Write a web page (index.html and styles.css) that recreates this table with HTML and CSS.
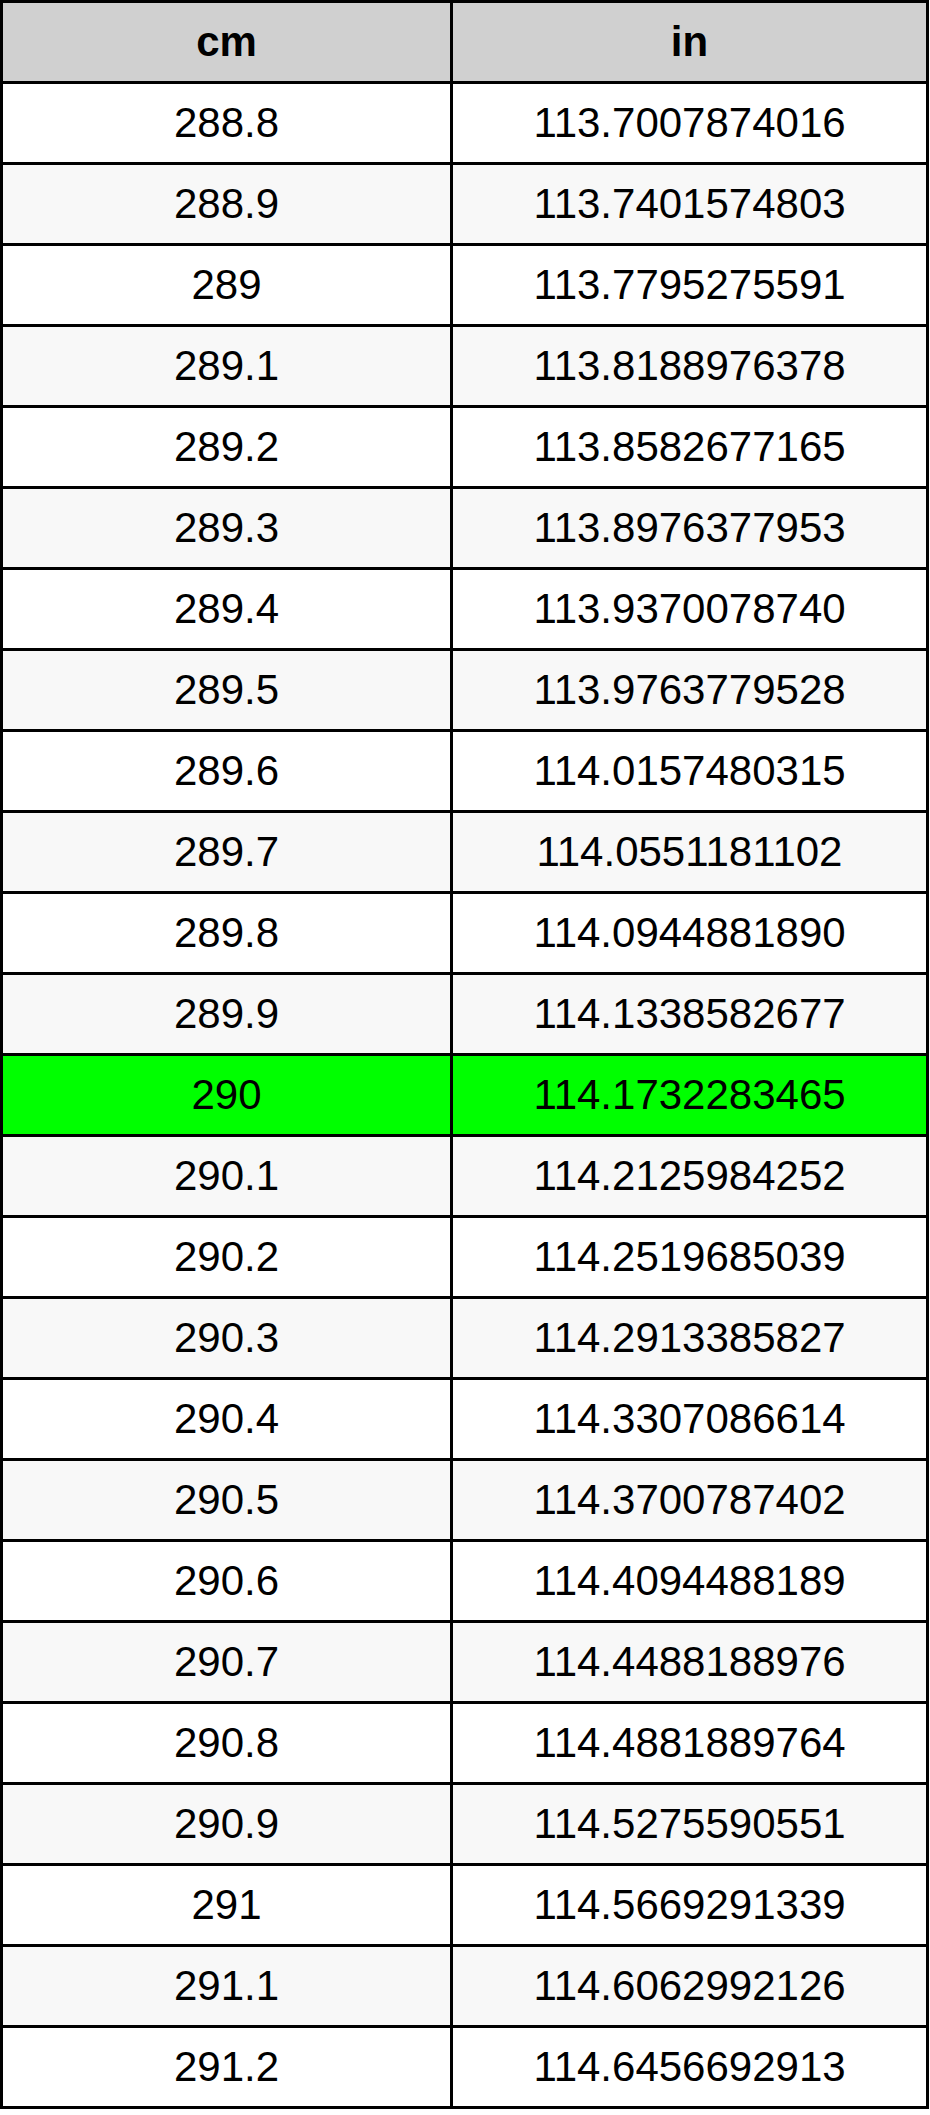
FILE: index.html
```html
<!DOCTYPE html>
<html>
<head>
<meta charset="utf-8">
<title>cm to in</title>
<link rel="stylesheet" href="styles.css">
</head>
<body>
<table class="conv">
<colgroup><col class="c1"><col class="c2"></colgroup>
<thead>
<tr><th>cm</th><th>in</th></tr>
</thead>
<tbody>
<tr><td>288.8</td><td>113.7007874016</td></tr>
<tr><td>288.9</td><td>113.7401574803</td></tr>
<tr><td>289</td><td>113.7795275591</td></tr>
<tr><td>289.1</td><td>113.8188976378</td></tr>
<tr><td>289.2</td><td>113.8582677165</td></tr>
<tr><td>289.3</td><td>113.8976377953</td></tr>
<tr><td>289.4</td><td>113.9370078740</td></tr>
<tr><td>289.5</td><td>113.9763779528</td></tr>
<tr><td>289.6</td><td>114.0157480315</td></tr>
<tr><td>289.7</td><td>114.0551181102</td></tr>
<tr><td>289.8</td><td>114.0944881890</td></tr>
<tr><td>289.9</td><td>114.1338582677</td></tr>
<tr class="hl"><td>290</td><td>114.1732283465</td></tr>
<tr><td>290.1</td><td>114.2125984252</td></tr>
<tr><td>290.2</td><td>114.2519685039</td></tr>
<tr><td>290.3</td><td>114.2913385827</td></tr>
<tr><td>290.4</td><td>114.3307086614</td></tr>
<tr><td>290.5</td><td>114.3700787402</td></tr>
<tr><td>290.6</td><td>114.4094488189</td></tr>
<tr><td>290.7</td><td>114.4488188976</td></tr>
<tr><td>290.8</td><td>114.4881889764</td></tr>
<tr><td>290.9</td><td>114.5275590551</td></tr>
<tr><td>291</td><td>114.5669291339</td></tr>
<tr><td>291.1</td><td>114.6062992126</td></tr>
<tr><td>291.2</td><td>114.6456692913</td></tr>
</tbody>
</table>
</body>
</html>
```
FILE: styles.css
```css
html, body {
  margin: 0;
  padding: 0;
  background: #ffffff;
}
.conv {
  width: 929px;
  table-layout: fixed;
  border-collapse: separate;
  border-spacing: 3px;
  background: #000000;
  font-family: "Liberation Sans", Arial, sans-serif;
  font-size: 42px;
  color: #000000;
}
.c1 { width: 447px; }
.c2 { width: 473px; }
.conv th,
.conv td {
  height: 78px;
  padding: 0;
  text-align: center;
  vertical-align: middle;
  background: #ffffff;
}
.conv th {
  background: #d0d0d0;
  font-weight: bold;
}
.conv tbody tr:nth-child(even) td {
  background: #f8f8f8;
}
.conv tbody tr.hl td {
  background: #00ff00;
}
```
